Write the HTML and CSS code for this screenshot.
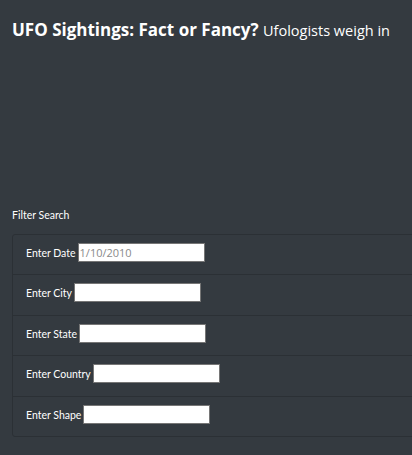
FILE: index.html
```html
<!DOCTYPE html>
<html lang="en">
<head>
<meta charset="utf-8">
<title>UFO Sightings</title>
<link rel="stylesheet" href="styles.css">
</head>
<body>
<header class="hero">
  <h1 class="title">UFO Sightings: Fact or Fancy? <small class="subtitle">Ufologists weigh in</small></h1>
</header>
<section class="filters">
  <p class="filters-heading">Filter Search</p>
  <ul class="list-group">
    <li class="list-item"><label class="field-label" for="date">Enter Date</label><input class="field-input" id="date" type="text" placeholder="1/10/2010"></li>
    <li class="list-item"><label class="field-label" for="city">Enter City</label><input class="field-input" id="city" type="text"></li>
    <li class="list-item"><label class="field-label" for="state">Enter State</label><input class="field-input" id="state" type="text"></li>
    <li class="list-item"><label class="field-label" for="country">Enter Country</label><input class="field-input" id="country" type="text"></li>
    <li class="list-item"><label class="field-label" for="shape">Enter Shape</label><input class="field-input" id="shape" type="text"></li>
  </ul>
</section>
</body>
</html>
```
FILE: styles.css
```css
html, body {
  margin: 0;
  padding: 0;
  background: #343a40;
  color: #ffffff;
  overflow: hidden;
  font-family: "Open Sans", "Noto Sans", "Liberation Sans", sans-serif;
}

.hero {
  height: 206px;
  padding: 0 12px;
  box-sizing: border-box;
}

.title {
  margin: 0;
  padding-top: 20px;
  font-size: 17px;
  font-weight: 700;
  line-height: 20px;
  white-space: nowrap;
}

.subtitle {
  font-size: 14.5px;
  font-weight: 400;
}

.filters {
  padding-left: 12px;
}

.filters-heading {
  margin: 0 0 10px 0;
  font-family: Lato, "Open Sans", sans-serif;
  font-size: 10.5px;
  line-height: 18px;
}

.list-group {
  list-style: none;
  margin: 0;
  padding: 0;
  width: 430px;
  border: 1px solid #2b3035;
  border-radius: 3px;
}

.list-item {
  box-sizing: border-box;
  display: flex;
  align-items: flex-start;
  gap: 2px;
  height: 40.4px;
  padding: 8px 0 0 13px;
  font-family: Lato, "Open Sans", sans-serif;
  font-size: 10.5px;
  border-top: 1px solid #2b3035;
}

.list-item:first-child {
  border-top: none;
  height: 39.4px;
}

.field-label {
  color: #ffffff;
  line-height: 20px;
}

.field-input {
  box-sizing: border-box;
  width: 127px;
  height: 19px;
  margin: 0;
  padding: 0 1px;
  border: 1px solid #767676;
  background: #ffffff;
  font-family: "Open Sans", sans-serif;
  font-size: 11px;
  color: #333;
}

.field-input::placeholder {
  color: #8a8a8a;
}
```
